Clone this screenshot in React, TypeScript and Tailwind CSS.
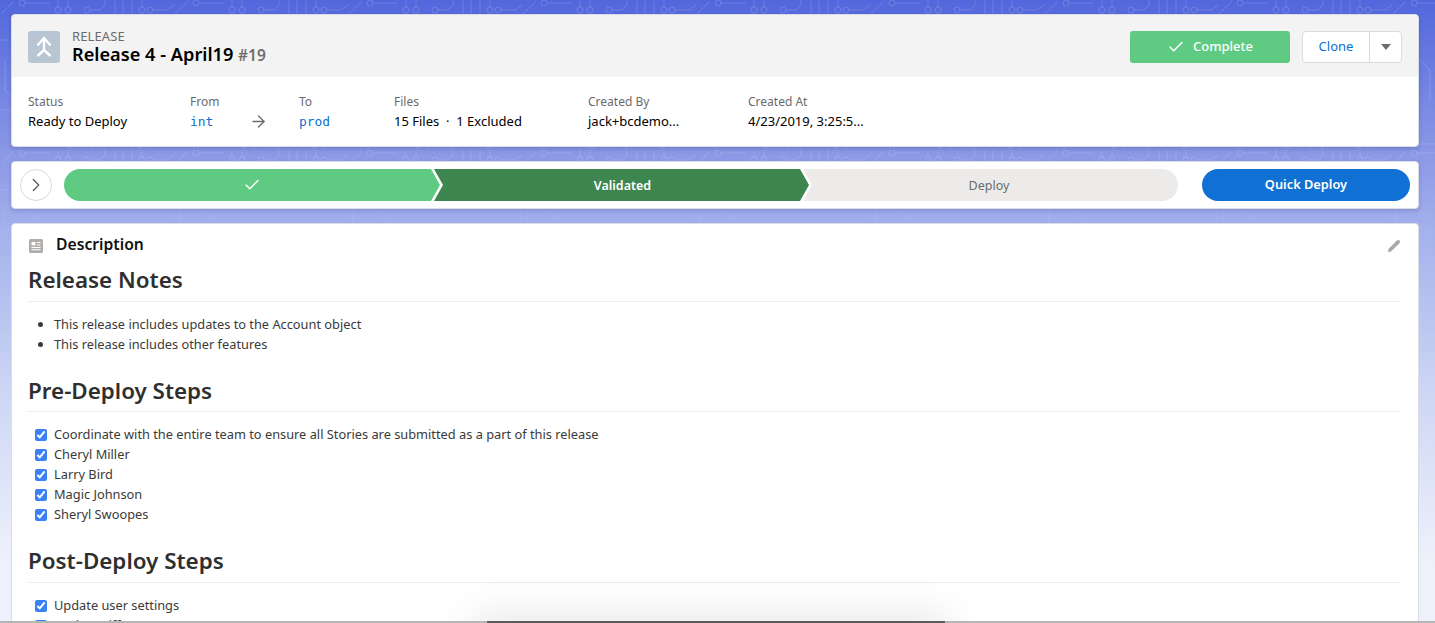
import { ArrowRight, Check, ChevronRight, Pencil } from 'lucide-react';

const fields = [
  { label: 'Status', width: 'w-[162px]', value: <span>Ready to Deploy</span> },
  { label: 'From', width: 'w-[109px]', value: <Branch name="int" arrow /> },
  { label: 'To', width: 'w-[95px]', value: <Branch name="prod" /> },
  { label: 'Files', width: 'w-[194px]', value: <span>15 Files &nbsp;·&nbsp; 1 Excluded</span> },
  { label: 'Created By', width: 'w-[160px]', value: <span>jack+bcdemo...</span> },
  { label: 'Created At', width: 'w-[160px]', value: <span>4/23/2019, 3:25:5...</span> },
];

function Branch({ name, arrow }: { name: string; arrow?: boolean }) {
  return (
    <div className="flex items-center">
      <span className="w-[59px] font-['DejaVu_Sans_Mono',monospace] text-[12.9px] text-[#0b6fd3]">{name}</span>
      {arrow && <ArrowRight className="h-[19px] w-[19px] text-[#706e6b]" strokeWidth={1.7} />}
    </div>
  );
}

function Tip({ fill }: { fill: string }) {
  return (
    <svg width="12" height="32" viewBox="0 0 12 32" className="absolute left-full top-0 z-10">
      <polygon points="0,0 3,0 12,16 3,32 0,32" fill="#ffffff" />
      <polygon points="0,0 9,16 0,32" fill={fill} />
    </svg>
  );
}

function Task({ text }: { text: string }) {
  return (
    <li className="flex h-5 items-center">
      <input type="checkbox" checked readOnly className="ml-[7px] mr-[7px] h-3 w-3 accent-[#3b80f5]" />
      <span>{text}</span>
    </li>
  );
}

function Heading({ text, className }: { text: string; className: string }) {
  return (
    <h2 className={`border-b border-[#eaecef] text-[22.4px] font-semibold leading-[31px] text-[#2f2f2f] ${className}`}>
      {text}
    </h2>
  );
}

export default function App() {
  return (
    <div className="relative h-[623px] w-[1435px] overflow-hidden bg-[linear-gradient(180deg,#5267dc_0%,#8a97e6_24%,#a3b1ec_37%,#ccd5f4_62%,#eef1fb_90%)] font-['Noto_Sans',sans-serif] text-[13px] text-[#333333]">
      {/* circuit board texture behind the cards */}
      <svg className="absolute inset-x-0 top-0 [mask-image:linear-gradient(#000_50%,transparent)]" width="1435" height="300" fill="none" stroke="#ffffff" strokeOpacity="0.15">
        <defs>
          <pattern id="circuit" width="174" height="150" patternUnits="userSpaceOnUse">
            <path d="M1 14 14 1M25 3h25M58 0v7M68 0v7M90 10h10l5-5V0M115 0v16M123 0v16M132 0v16M142 0v7M153 10h14l14-10" />
            <circle cx="22" cy="3" r="3" />
            <circle cx="58" cy="10" r="3" />
            <circle cx="68" cy="10" r="3" />
            <circle cx="87" cy="10" r="3" />
            <circle cx="142" cy="10" r="3" />
            <circle cx="150" cy="10" r="3" />
            <path d="M0 40h8M5 60v30l5 5M0 110h10M28 60l10 10v30M160 30l14 14v40M166 90h8v30" />
            <path d="M20 150v-6h40M80 150v-12M92 150v-12M104 150v-12h30M150 150v-8h24" />
            <circle cx="70" cy="145" r="3" />
            <circle cx="140" cy="145" r="3" />
          </pattern>
        </defs>
        <rect width="1435" height="300" fill="url(#circuit)" stroke="none" />
      </svg>

      <div className="relative flex flex-col gap-[14px] pl-[11px] pr-[16px] pt-[14px]">
        <section className="h-[133px] overflow-hidden rounded border border-[#d8dde6] bg-white shadow-[0_2px_4px_rgba(40,50,120,0.25)]">
          <header className="flex h-[62px] items-center justify-between bg-[#f3f3f3] pl-4 pr-4 pt-[2px]">
            <div className="flex items-center gap-3">
              <span className="flex h-8 w-8 items-center justify-center rounded-[3px] bg-[#b8c5d3]">
                <svg width="32" height="32" viewBox="0 0 32 32" fill="none" stroke="#ffffff" strokeWidth="2.4">
                  <path d="M9.5 14.5 16 7l6.5 7.5" />
                  <path d="M16 8v11.5M16 19 9.5 25M16 19l6.5 6" />
                </svg>
              </span>
              <div className="pt-[2px]">
                <div className="text-[13px] leading-[13px] tracking-[0.1px] text-[#6b6b6b]">RELEASE</div>
                <h1 className="text-[18.2px] font-semibold leading-[22px] text-black">
                  Release 4 - April19 <span className="text-[15.5px] text-[#706e6b]">#19</span>
                </h1>
              </div>
            </div>
            <div className="flex items-center gap-3">
              <button className="flex h-8 w-40 items-center justify-center gap-2 rounded-[3px] bg-[#5fcb82] text-[13px] font-medium text-white">
                <Check className="h-[18px] w-[18px]" strokeWidth={1.9} />
                Complete
              </button>
              <div className="flex h-[32px] overflow-hidden rounded-[4px] border border-[#dddbda] bg-white">
                <button className="w-[67px] border-r border-[#dddbda] text-[13px] text-[#0b6fd3]">Clone</button>
                <button className="flex w-[31px] items-center justify-center">
                  <span className="h-0 w-0 border-x-[5.5px] border-t-[6px] border-x-transparent border-t-[#706e6b]" />
                </button>
              </div>
            </div>
          </header>
          <div className="flex pl-4 pt-4">
            {fields.map((f) => (
              <div key={f.label} className={f.width}>
                <div className="text-[12px] leading-[17px] text-[#6b6b6b]">{f.label}</div>
                <div className="mt-[2px] flex h-[20px] items-center text-black">{f.value}</div>
              </div>
            ))}
          </div>
        </section>

        <section className="flex h-[48px] items-center rounded border border-[#d8dde6] bg-white pl-2 pr-2 shadow-[0_2px_4px_rgba(40,50,120,0.2)]">
          <button className="flex h-8 w-8 shrink-0 items-center justify-center rounded-full border border-[#dddbda] bg-white text-[#54565a]">
            <ChevronRight className="h-[22px] w-[22px]" strokeWidth={1.3} />
          </button>
          <div className="ml-3 flex h-8 w-[1114px] text-[12.5px]">
            <div className="relative z-20 flex w-[367px] items-center justify-center rounded-l-full bg-[#5fcb82] pl-[9px] text-white">
              <Check className="h-[18px] w-[18px]" strokeWidth={1.9} />
              <Tip fill="#5fcb82" />
            </div>
            <div className="relative z-10 flex w-[369px] items-center justify-center bg-[#3d8650] pl-[14px] pt-[2px] font-semibold text-white">
              Validated
              <Tip fill="#3d8650" />
            </div>
            <div className="flex flex-1 items-center justify-center rounded-r-full bg-[#ecebea] pt-[2px] text-[#6b6b6b]">Deploy</div>
          </div>
          <button className="ml-6 h-8 w-[208px] rounded-full bg-[#1170d3] text-[12.8px] font-semibold text-white">Quick Deploy</button>
        </section>

        <section className="h-[420px] overflow-hidden rounded border border-[#d8dde6] bg-white pl-4 pr-[17px] pt-[10px] text-[12.8px] text-[#3a3a3a]">
          <div className="flex h-6 items-center justify-between">
            <div className="flex items-center">
              <svg width="14" height="14" viewBox="0 0 14 14" className="ml-px">
                <rect width="14" height="14" rx="1.5" fill="#b0adab" />
                <path d="M2.5 3h4v3.5h-4zM8 3h3.5v1H8zM8 5.5h3.5v1H8zM2.5 8h9v1h-9zM2.5 10.2h9v1h-9z" fill="#ffffff" />
              </svg>
              <h2 className="mb-[2px] ml-[13px] text-[15.7px] font-semibold text-[#111111]">Description</h2>
            </div>
            <Pencil className="h-[14px] w-[14px] fill-[#a8a8a8] text-[#a8a8a8]" strokeWidth={1} />
          </div>

          <Heading text="Release Notes" className="mt-[6px] pb-[6px]" />
          <ul className="ml-[26px] mt-[12px] list-disc leading-5">
            <li>This release includes updates to the Account object</li>
            <li>This release includes other features</li>
          </ul>

          <Heading text="Pre-Deploy Steps" className="mt-[21px] pb-[5px]" />
          <ul className="mt-[13px]">
            <Task text="Coordinate with the entire team to ensure all Stories are submitted as a part of this release" />
            <Task text="Cheryl Miller" />
            <Task text="Larry Bird" />
            <Task text="Magic Johnson" />
            <Task text="Sheryl Swoopes" />
          </ul>

          <Heading text="Post-Deploy Steps" className="mt-5 pb-[6px]" />
          <ul className="mt-[13px]">
            <Task text="Update user settings" />
            <Task text="Update Tiff" />
          </ul>
        </section>
      </div>

      <div className="absolute bottom-[-22px] left-[470px] h-[30px] w-[480px] rounded-full bg-[#000000]/10 blur-[18px]" />
      <div className="absolute inset-x-0 bottom-0 h-[2px] bg-[#b5b5b5]" />
      <div className="absolute bottom-0 left-[487px] h-[2px] w-[458px] bg-[#5c5c5c]" />
    </div>
  );
}
